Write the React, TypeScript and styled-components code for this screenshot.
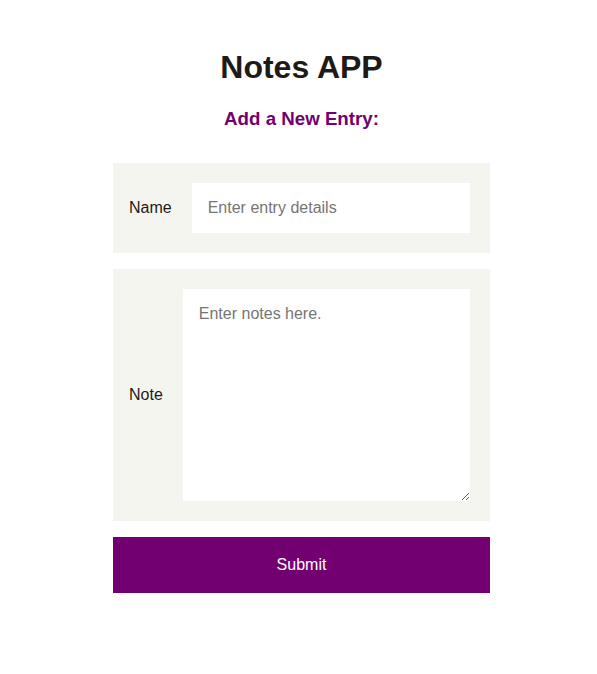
import React from "react";
import styled, { createGlobalStyle } from "styled-components";

const Global = createGlobalStyle`
  html, body { margin: 0; padding: 0; background: #ffffff; }
  body { font-family: "Liberation Sans", Arial, sans-serif; color: #1f1a17; }
`;

const Page = styled.main`
  display: flex;
  flex-direction: column;
  align-items: center;
  padding: 48px 0 0 6px;
`;

const Title = styled.h1`
  margin: 0;
  font-size: 32px;
  line-height: 38px;
  font-weight: 700;
  color: #1f1a17;
`;

const Subtitle = styled.h3`
  margin: 22px 0 0;
  font-size: 18.72px;
  line-height: 22px;
  font-weight: 700;
  color: #730070;
`;

const Form = styled.form`
  margin-top: 33px;
  width: 377px;
  display: flex;
  flex-direction: column;
  gap: 16px;
`;

const Row = styled.div`
  display: flex;
  align-items: center;
  gap: 20px;
  padding: 20px 20px 20px 16px;
  background: #f5f5f0;
`;

const Label = styled.label`
  font-size: 16px;
  color: #1f1a17;
  flex: 0 0 auto;
`;

const TextInput = styled.input`
  flex: 1;
  min-width: 0;
  height: 50px;
  box-sizing: border-box;
  border: none;
  outline: none;
  background: #ffffff;
  padding: 0 16px;
  font-family: "Liberation Sans", Arial, sans-serif;
  font-size: 16px;
  color: #1f1a17;
  &::placeholder { color: #757575; }
`;

const TextArea = styled.textarea`
  flex: 1;
  min-width: 0;
  height: 212px;
  box-sizing: border-box;
  border: none;
  outline: none;
  background: #ffffff;
  padding: 16px 16px;
  font-family: "Liberation Sans", Arial, sans-serif;
  font-size: 16px;
  line-height: 18px;
  color: #1f1a17;
  &::placeholder { color: #757575; }
`;

const SubmitButton = styled.button`
  height: 56px;
  border: none;
  background: #730070;
  color: #ffffff;
  font-family: "Liberation Sans", Arial, sans-serif;
  font-size: 16px;
  cursor: pointer;
`;

export default function App() {
  return (
    <>
      <Global />
      <Page>
        <Title>Notes APP</Title>
        <Subtitle>Add a New Entry:</Subtitle>
        <Form onSubmit={(e) => e.preventDefault()}>
          <Row>
            <Label htmlFor="name">Name</Label>
            <TextInput id="name" type="text" placeholder="Enter entry details" />
          </Row>
          <Row>
            <Label htmlFor="note">Note</Label>
            <TextArea id="note" placeholder="Enter notes here." />
          </Row>
          <SubmitButton type="submit">Submit</SubmitButton>
        </Form>
      </Page>
    </>
  );
}
